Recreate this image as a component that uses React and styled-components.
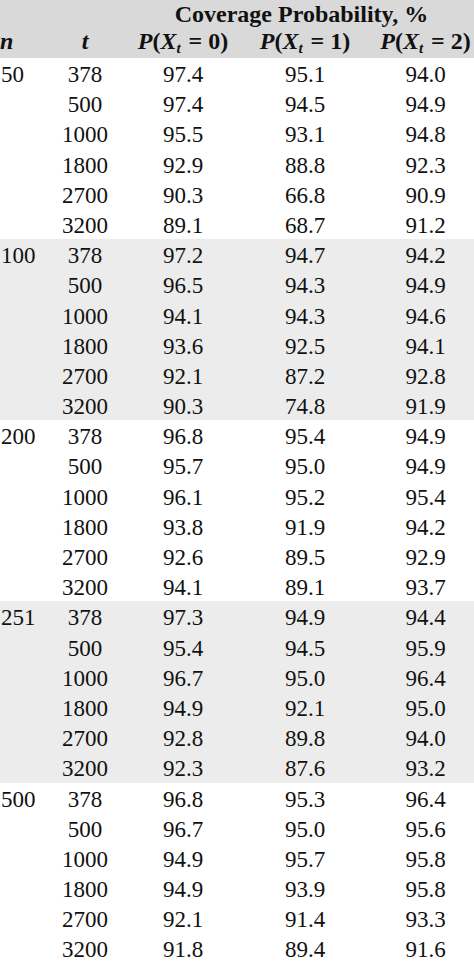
import React from 'react';
import styled, {createGlobalStyle} from "styled-components";

const Global = createGlobalStyle`
  html, body {
    margin: 0;
    padding: 0;
    background: #ffffff;
  }
  body {
    font-family: "Liberation Serif", "Times New Roman", serif;
    color: #111111;
  }
`

const Table = styled.div`
  width: 474px;
  display: flex;
  flex-direction: column;
`

const cols = "45px 80px 116px 128px 105px"

const Head = styled.div`
  background-color: #d9d9d9;
  height: 58px;
  display: grid;
  grid-template-columns: ${cols};
  grid-template-rows: 27px 31px;
  font-weight: bold;
  font-size: 24px;
`

const Title = styled.div`
  grid-column: 3 / 6;
  grid-row: 1;
  text-align: center;
  line-height: 28px;
  padding-left: 4px;
`

const HeadCell = styled.div`
  grid-row: 2;
  line-height: 29px;
  text-align: ${p => p.left ? "left" : "center"};
  padding-left: ${p => p.shift || 0}px;
  font-style: ${p => p.italic ? "italic" : "normal"};
  white-space: nowrap;
`

const Sub = styled.sub`
  font-size: 15px;
  font-style: italic;
  vertical-align: -4px;
  line-height: 0;
`

const Eq = styled.span`
  display: inline-block;
  padding: 0 6px 0 8px;
`

const Group = styled.div`
  background-color: ${p => p.shaded ? "#ececec" : "#ffffff"};
  display: flex;
  flex-direction: column;
`

const Row = styled.div`
  display: grid;
  grid-template-columns: ${cols};
  height: 30.2px;
  line-height: 30px;
  font-size: 23px;
  padding-top: 2px;
  box-sizing: border-box;
`

const Cell = styled.div`
  text-align: ${p => p.left ? "left" : "center"};
  padding-left: ${p => p.shift || 0}px;
  white-space: nowrap;
`

const Prob = ({v}) => (
    <span>
        <i>P</i>(<i>X</i><Sub>t</Sub><Eq>=</Eq>{v})
    </span>
)

const data = [
    {n: 50, rows: [
        [378, "97.4", "95.1", "94.0"],
        [500, "97.4", "94.5", "94.9"],
        [1000, "95.5", "93.1", "94.8"],
        [1800, "92.9", "88.8", "92.3"],
        [2700, "90.3", "66.8", "90.9"],
        [3200, "89.1", "68.7", "91.2"],
    ]},
    {n: 100, rows: [
        [378, "97.2", "94.7", "94.2"],
        [500, "96.5", "94.3", "94.9"],
        [1000, "94.1", "94.3", "94.6"],
        [1800, "93.6", "92.5", "94.1"],
        [2700, "92.1", "87.2", "92.8"],
        [3200, "90.3", "74.8", "91.9"],
    ]},
    {n: 200, rows: [
        [378, "96.8", "95.4", "94.9"],
        [500, "95.7", "95.0", "94.9"],
        [1000, "96.1", "95.2", "95.4"],
        [1800, "93.8", "91.9", "94.2"],
        [2700, "92.6", "89.5", "92.9"],
        [3200, "94.1", "89.1", "93.7"],
    ]},
    {n: 251, rows: [
        [378, "97.3", "94.9", "94.4"],
        [500, "95.4", "94.5", "95.9"],
        [1000, "96.7", "95.0", "96.4"],
        [1800, "94.9", "92.1", "95.0"],
        [2700, "92.8", "89.8", "94.0"],
        [3200, "92.3", "87.6", "93.2"],
    ]},
    {n: 500, rows: [
        [378, "96.8", "95.3", "96.4"],
        [500, "96.7", "95.0", "95.6"],
        [1000, "94.9", "95.7", "95.8"],
        [1800, "94.9", "93.9", "95.8"],
        [2700, "92.1", "91.4", "93.3"],
        [3200, "91.8", "89.4", "91.6"],
    ]},
]

const App = () => {
    return (
        <Table>
            <Global/>
            <Head>
                <Title>Coverage Probability, %</Title>
                <HeadCell left italic>n</HeadCell>
                <HeadCell italic>t</HeadCell>
                <HeadCell><Prob v={0}/></HeadCell>
                <HeadCell><Prob v={1}/></HeadCell>
                <HeadCell shift={8}><Prob v={2}/></HeadCell>
            </Head>
            {data.map((g, gi) =>
                <Group key={g.n} shaded={gi % 2 === 1}>
                    {g.rows.map((r, ri) =>
                        <Row key={r[0]}>
                            <Cell left shift={1}>{ri === 0 ? g.n : ""}</Cell>
                            <Cell>{r[0]}</Cell>
                            <Cell>{r[1]}</Cell>
                            <Cell>{r[2]}</Cell>
                            <Cell shift={8}>{r[3]}</Cell>
                        </Row>
                    )}
                </Group>
            )}
        </Table>
    );
};

export default App;
